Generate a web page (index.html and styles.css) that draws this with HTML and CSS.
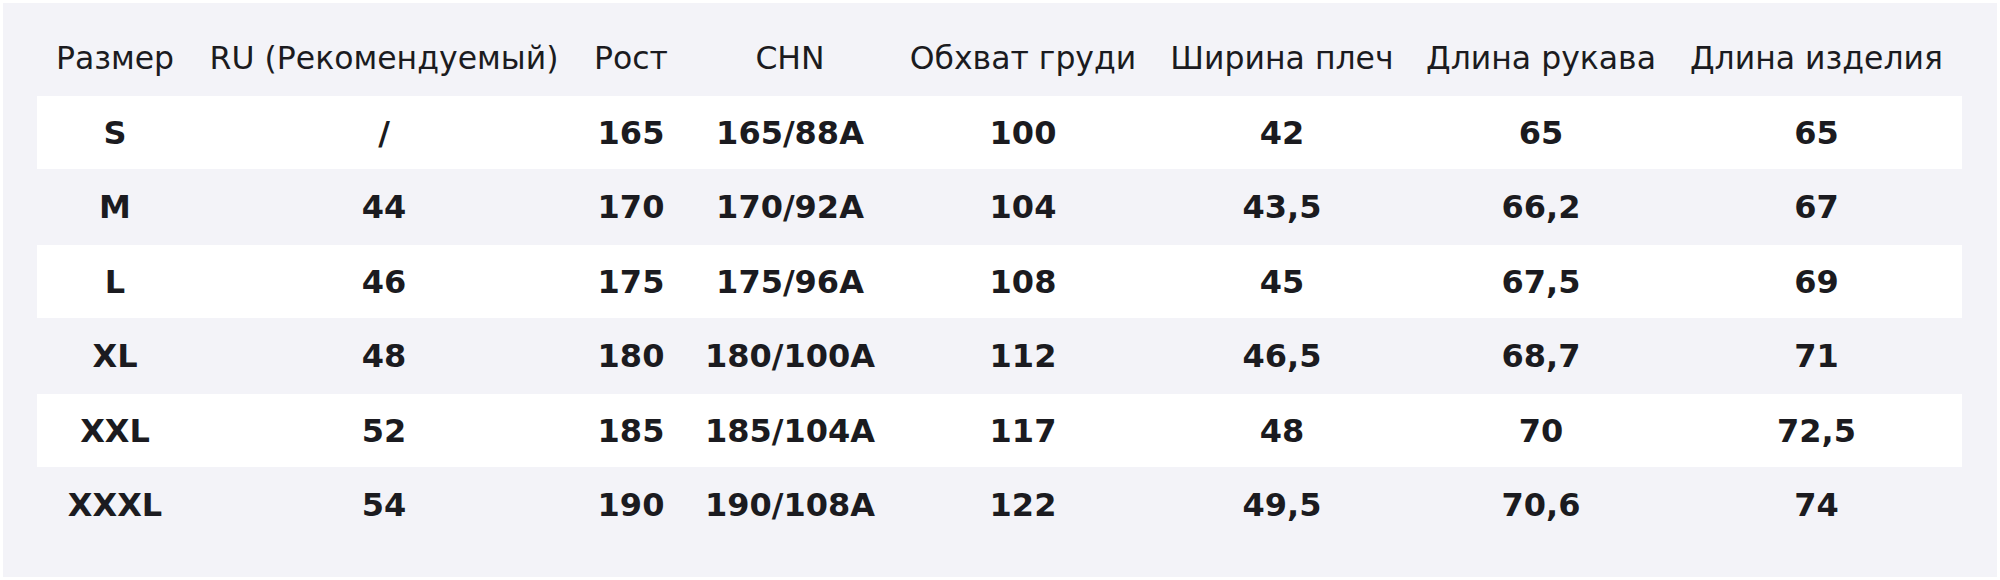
FILE: index.html
```html
<!DOCTYPE html>
<html lang="ru">
<head>
<meta charset="utf-8">
<title>Таблица размеров</title>
<link rel="stylesheet" href="styles.css">
</head>
<body>
<div class="card">
  <table class="sizes">
    <colgroup>
      <col class="c1"><col class="c2"><col class="c3"><col class="c4">
      <col class="c5"><col class="c6"><col class="c7"><col class="c8">
    </colgroup>
    <thead>
      <tr>
        <th>Размер</th><th>RU (Рекомендуемый)</th><th>Рост</th><th>CHN</th>
        <th>Обхват груди</th><th>Ширина плеч</th><th>Длина рукава</th><th>Длина изделия</th>
      </tr>
    </thead>
    <tbody>
      <tr class="light"><td>S</td><td>/</td><td>165</td><td>165/88A</td><td>100</td><td>42</td><td>65</td><td>65</td></tr>
      <tr class="tint"><td>M</td><td>44</td><td>170</td><td>170/92A</td><td>104</td><td>43,5</td><td>66,2</td><td>67</td></tr>
      <tr class="light"><td>L</td><td>46</td><td>175</td><td>175/96A</td><td>108</td><td>45</td><td>67,5</td><td>69</td></tr>
      <tr class="tint"><td>XL</td><td>48</td><td>180</td><td>180/100A</td><td>112</td><td>46,5</td><td>68,7</td><td>71</td></tr>
      <tr class="light"><td>XXL</td><td>52</td><td>185</td><td>185/104A</td><td>117</td><td>48</td><td>70</td><td>72,5</td></tr>
      <tr class="tint"><td>XXXL</td><td>54</td><td>190</td><td>190/108A</td><td>122</td><td>49,5</td><td>70,6</td><td>74</td></tr>
    </tbody>
  </table>
</div>
</body>
</html>
```

FILE: styles.css
```css
html, body {
  margin: 0;
  padding: 0;
  background: #ffffff;
}

body {
  padding: 3px;
  font-family: "DejaVu Sans", "Noto Sans", sans-serif;
  color: #1b1b20;
}

.card {
  background: #f3f3f8;
  height: 574px;
  box-sizing: border-box;
  padding: 17px 35px 0 34px;
}

.sizes {
  width: 100%;
  border-collapse: collapse;
  table-layout: fixed;
}

.c1 { width: 156px; }
.c2 { width: 382px; }
.c3 { width: 112px; }
.c4 { width: 206px; }
.c5 { width: 260px; }
.c6 { width: 258px; }
.c7 { width: 260px; }
.c8 { width: 291px; }

.sizes th {
  height: 76px;
  padding: 0;
  font-size: 31.5px;
  font-weight: normal;
  text-align: center;
  vertical-align: middle;
  white-space: nowrap;
}

.sizes td {
  padding: 0;
  font-size: 32px;
  font-weight: bold;
  text-align: center;
  vertical-align: middle;
  white-space: nowrap;
}

.sizes tr.light td {
  background: #ffffff;
  height: 73px;
}

.sizes tr.tint td {
  height: 76px;
}
```
